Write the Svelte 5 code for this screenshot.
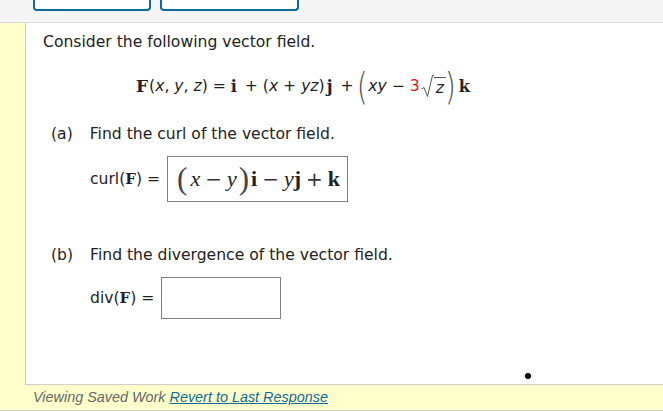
<script lang="ts">
  let divAnswer = "";
</script>

<div class="page">
  <div class="topbar">
    <button type="button" class="tab first" aria-label="first"></button>
    <button type="button" class="tab second" aria-label="second"></button>
  </div>

  <div class="middle">
    <div class="panel">
      <p class="intro">Consider the following vector field.</p>

      <div class="formula">
        <b class="bf fvec">F</b>(<i>x</i>, <i>y</i>, <i>z</i>) = <b class="bs ivec">i</b> + (<i>x</i> + <i>yz</i>)<b class="bs jvec">j</b> +
        <span class="bigparen">(</span><i>xy</i> − <span class="red">3</span><span class="sqrt"><svg width="13" height="24" viewBox="0 0 13 24"><path d="M0.5 15 L3 13.5 L6.5 22.5 L11.5 1.5 L13 1.5" fill="none" stroke="#555" stroke-width="1" /></svg><i class="radicand">z</i></span><span class="bigparen right">)</span><b class="bs">k</b>
      </div>

      <div class="part">
        <span class="label">(a)</span>
        <span>Find the curl of the vector field.</span>
      </div>
      <div class="answer curl">
        <span>curl(<b class="bf">F</b>) =</span>
        <div class="box filled">
          <span class="mparen">(</span><i class="mx">x</i><span class="op">−</span><i>y</i><span class="mparen">)</span><b>i</b><span class="op">−</span><i>y</i><b>j</b><span class="op">+</span><b>k</b>
        </div>
      </div>

      <div class="part second-part">
        <span class="label">(b)</span>
        <span>Find the divergence of the vector field.</span>
      </div>
      <div class="answer div">
        <span>div(<b class="bf">F</b>) =</span>
        <input class="box empty" type="text" bind:value={divAnswer} />
      </div>
    </div>
  </div>

  <div class="footer">
    <i>Viewing Saved Work <a href="#revert">Revert to Last Response</a></i>
  </div>

  <span class="dot"></span>
</div>

<style>
  :global(body) {
    margin: 0;
    background: #ffffcc;
  }
  .page {
    position: relative;
    width: 663px;
    height: 411px;
    overflow: hidden;
    display: flex;
    flex-direction: column;
    font-family: "DejaVu Sans", Verdana, sans-serif;
    font-size: 15.6px;
    color: #222;
  }
  .topbar {
    box-sizing: border-box;
    height: 23px;
    padding: 0 0 11px 33px;
    background: #f5f5f5;
    border-bottom: 1px solid #dcdcdc;
    display: flex;
    align-items: flex-end;
    gap: 9px;
  }
  .tab {
    display: block;
    height: 12px;
    padding: 0;
    background: #fff;
    border: 2px solid #0f6a9c;
    border-top: none;
    border-radius: 0 0 4px 4px;
  }
  .tab.first {
    width: 118px;
  }
  .tab.second {
    width: 139px;
  }
  .middle {
    height: 362px;
    padding-left: 25px;
    display: flex;
  }
  .panel {
    flex: 1;
    background: #fff;
    border-left: 1px solid #cfcfcf;
    border-bottom: 1px solid #cfcfcf;
    padding: 9px 0 0 17px;
  }
  .intro {
    margin: 0;
    line-height: 20px;
  }
  .formula {
    height: 44px;
    margin: 12px 0 0 93px;
    display: flex;
    align-items: center;
    white-space: pre;
  }
  .bf,
  .bs {
    font-family: "DejaVu Serif", serif;
    font-weight: bold;
    font-size: 15px;
  }
  .fvec {
    font-size: 17px;
    margin-right: 1px;
  }
  .bs {
    font-size: 16px;
  }
  .ivec {
    margin-right: 3px;
  }
  .jvec {
    margin: 0 3px 0 2px;
  }
  .bigparen {
    font-size: 38px;
    font-weight: 200;
    color: #555;
    line-height: 40px;
    transform: scaleX(0.75);
    margin: 0 -2px 0 -3px;
  }
  .bigparen.right {
    margin: 0 1px 0 -3px;
  }
  .red {
    color: #e8141c;
    margin-right: 1px;
  }
  .sqrt {
    display: inline-flex;
    align-items: flex-end;
  }
  .sqrt svg {
    display: block;
  }
  .radicand {
    border-top: 1px solid #555;
    padding: 0 2px;
    line-height: 20px;
  }
  .part {
    display: flex;
    gap: 17px;
    margin: 16px 0 0 8px;
    line-height: 20px;
  }
  .second-part {
    margin-top: 43px;
  }
  .answer {
    display: flex;
    align-items: center;
    gap: 7px;
    margin: 13px 0 0 47px;
  }
  .box {
    box-sizing: border-box;
    border: 1px solid #808080;
    background: #fff;
    margin: 0;
  }
  .filled {
    height: 46px;
    width: 181px;
    display: flex;
    align-items: center;
    padding-left: 7px;
    font-family: "Liberation Serif", serif;
    font-size: 22px;
    color: #222;
    white-space: pre;
  }
  .curl {
    margin-top: 12px;
  }
  .mparen {
    font-size: 31px;
    font-weight: normal;
    color: #444;
    margin: 0 2px;
  }
  .mx {
    margin-left: 1px;
  }
  .op {
    font-family: "DejaVu Sans", sans-serif;
    font-size: 20px;
    margin: 0 5px;
    color: #333;
  }
  .div {
    margin-top: 12px;
  }
  .empty {
    display: block;
    width: 120px;
    height: 42px;
    padding: 0;
    outline: none;
  }
  .footer {
    flex: 1;
    padding: 4px 0 0 33px;
    font-family: "Liberation Sans", Arial, sans-serif;
    font-size: 14.4px;
    color: #666;
    border-bottom: 1px solid #cfcfcf;
  }
  .footer a {
    color: #0f6a9c;
    text-decoration: underline;
  }
  .dot {
    position: absolute;
    left: 525px;
    top: 373px;
    width: 6px;
    height: 6px;
    border-radius: 50%;
    background: #000;
  }
</style>
